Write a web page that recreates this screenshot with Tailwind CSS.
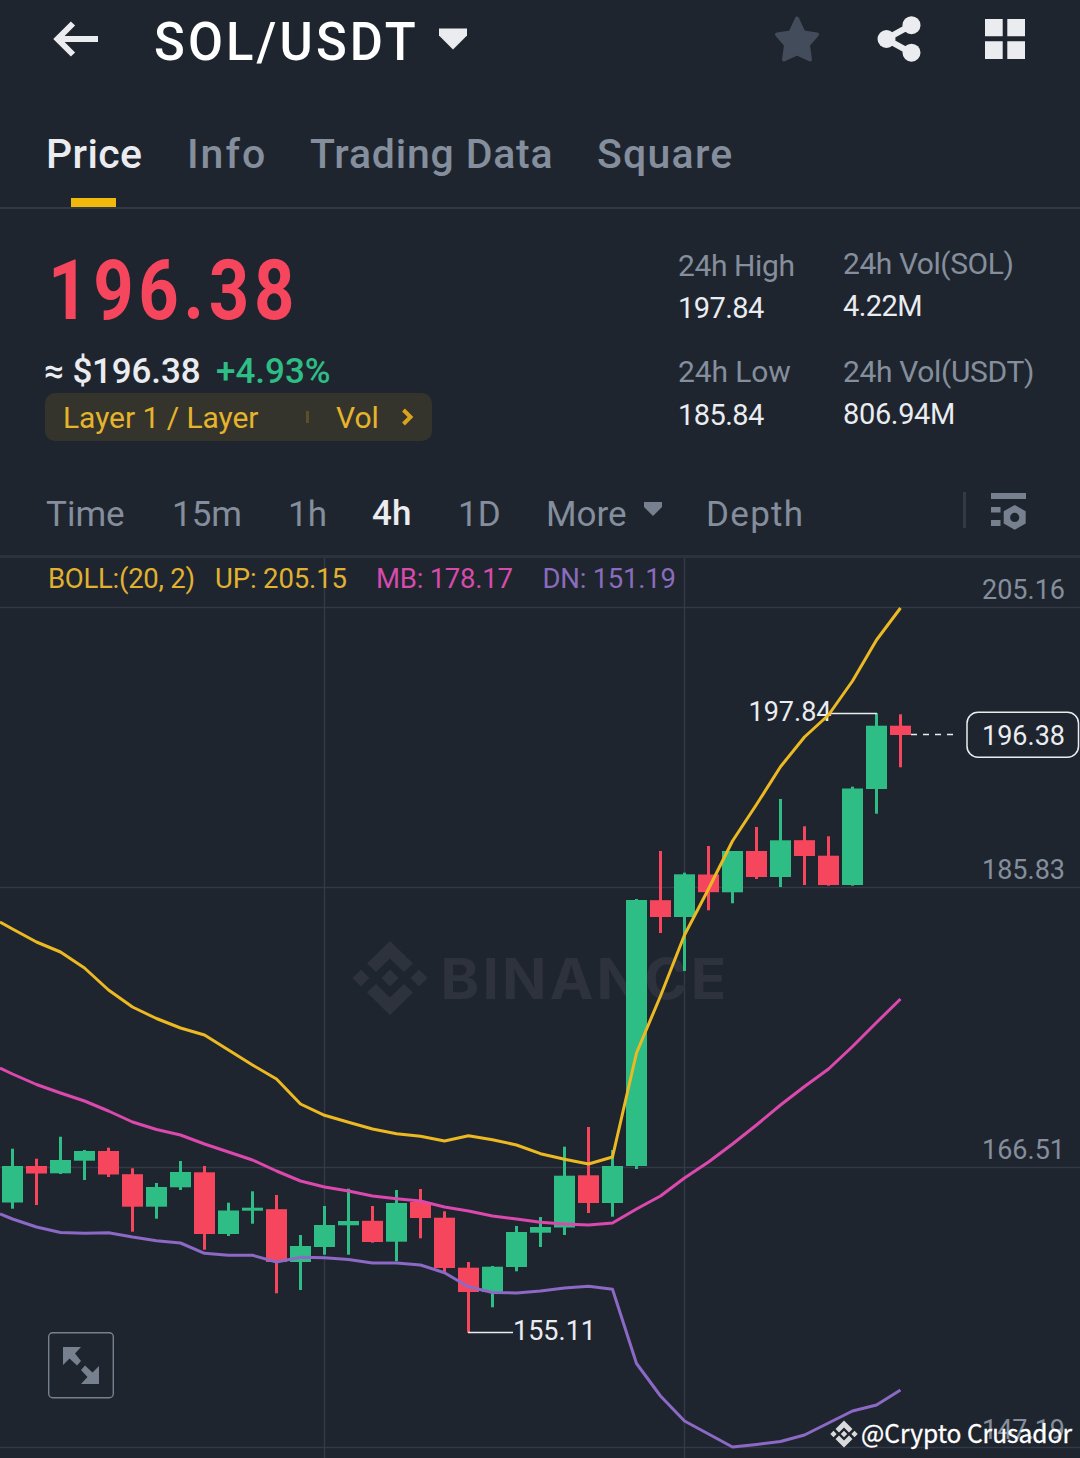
<!DOCTYPE html>
<html lang="en">
<head>
<meta charset="utf-8">
<title>SOL/USDT</title>
<script src="https://cdn.jsdelivr.net/npm/@tailwindcss/browser@4"></script>
</head>
<body class="bg-[#1f252f]">
<main class="flex h-[1458px] w-[1080px] flex-col overflow-hidden bg-[#1f252f] font-[Roboto,sans-serif] whitespace-nowrap text-[#848e9c]">

  <header class="flex h-[82px] shrink-0 pl-[53px]">
    <svg class="mt-[20px] h-[38px] w-[46px]" viewBox="0 0 46 38" fill="none" stroke="#eaecef" stroke-width="6"><path d="M4 19H45M20 3.500L4.500 19L20 34.500"/></svg>
    <h1 class="ml-[55px] w-[285px] origin-left scale-x-[0.94] text-[54px] leading-[83px] font-medium tracking-[3.350px] text-white">SOL/USDT</h1>
    <svg class="mt-[28px] h-[22px] w-[28px]" viewBox="0 0 28 22" fill="#eaecef"><path d="M0 .5H28V7.500L14 21.500L0 7.500Z"/></svg>
    <svg class="mt-[15px] ml-[307px] h-[48px] w-[46px]" viewBox="0 0 46 48" fill="#434c5a" stroke="#434c5a" stroke-width="4" stroke-linejoin="round"><path d="M23 3.500L29.500 17.500L43 19.500L34 30L36 44.500L23 38.500L10 44.500L12 30L3 19.500L16.500 17.500Z"/></svg>
    <svg class="mt-[15px] ml-[57px] h-[48px] w-[44px]" viewBox="0 0 44 48" fill="#eaecef" stroke="#eaecef"><path d="M34.500 10L9 24L34.500 38" fill="none" stroke-width="6"/><g stroke="none"><circle cx="34.500" cy="10.200" r="9"/><circle cx="9.500" cy="24" r="9"/><circle cx="34.500" cy="37.700" r="9"/></g></svg>
    <svg class="mt-[19px] ml-[64px] h-[40px] w-[40px]" viewBox="0 0 40 40" fill="#eaecef"><path d="M0 0H17.700V17.300H0ZM22.300 0H40V17.300H22.300ZM0 22.300H17.700V40H0ZM22.300 22.300H40V40H22.300Z"/></svg>
  </header>

  <nav class="flex h-[127px] shrink-0 border-b-2 border-[#333a46] pt-[42px] pl-[46px] text-[41px] leading-[60px] font-medium">
    <div class="flex w-[141px] flex-col text-[#eaecef]">
      <span class="h-[74px] tracking-[0.400px]">Price</span>
      <i class="ml-[25px] h-[9px] w-[45px] bg-[#f0b90b]"></i>
    </div>
    <span class="w-[123px] tracking-[2px]">Info</span>
    <span class="w-[287px] tracking-[0.800px]">Trading Data</span>
    <span class="tracking-[1.250px]">Square</span>
  </nav>

  <section class="flex h-[263px] shrink-0">
    <div class="w-[678px] pt-[41px]">
      <div class="ml-[48px] h-[100px] w-[300px] origin-left scale-x-[0.84] text-[84px] leading-[82px] font-bold tracking-[5.600px] text-[#f6465d]">196.38</div>
      <div class="flex h-[43px] pl-[44px] text-[35px] leading-[43px] font-medium">
        <span class="w-[172px] tracking-[-0.150px] text-[#eaecef]">≈ $196.38</span>
        <span class="text-[#2ebd85]">+4.93%</span>
      </div>
      <div class="ml-[45px] flex h-[48px] w-[387px] items-center rounded-[10px] bg-[#35342c] pl-[18px] text-[30px] leading-[48px] text-[#e6b42c]">
        <span class="w-[243px] pt-[2px] tracking-[-0.050px]">Layer 1 / Layer</span>
        <i class="h-[12px] w-[3px] bg-[#5c4e28]"></i>
        <span class="ml-[27px] w-[66px] pt-[2px]">Vol</span>
        <svg class="h-[18px] w-[12px]" viewBox="0 0 12 18" fill="none" stroke="#d9a41c" stroke-width="4"><path d="M1.500 2L8.500 9L1.500 16"/></svg>
      </div>
    </div>
    <div class="w-[165px] pt-[36px] text-[30px] leading-[42px]">
      <div class="tracking-[-0.400px]">24h High</div>
      <div class="mb-[22px] text-[29px] tracking-[-0.550px] text-[#eaecef]">197.84</div>
      <div class="tracking-[-0.100px]">24h Low</div>
      <div class="pt-px text-[29px] tracking-[-0.550px] text-[#eaecef]">185.84</div>
    </div>
    <div class="pt-[34px] text-[30px] leading-[42px]">
      <div class="tracking-[-0.450px]">24h Vol(SOL)</div>
      <div class="mb-[24px] text-[29px] tracking-[-0.600px] text-[#eaecef]">4.22M</div>
      <div class="tracking-[-0.350px]">24h Vol(USDT)</div>
      <div class="text-[29px] tracking-[-0.350px] text-[#eaecef]">806.94M</div>
    </div>
  </section>

  <div class="flex h-[86px] shrink-0 border-b-3 border-[#2b313d] pl-[46px] text-[35px] leading-[85px]">
    <span class="w-[126px]">Time</span>
    <span class="w-[116px]">15m</span>
    <span class="w-[84px]">1h</span>
    <span class="w-[86px] leading-[83px] font-medium text-[#eaecef]">4h</span>
    <span class="w-[88px]">1D</span>
    <span class="w-[98px]">More</span>
    <svg class="mt-[30px] h-[14px] w-[18px]" viewBox="0 0 18 14" fill="#76808f"><path d="M0 0H18V5L9 14L0 5Z"/></svg>
    <span class="ml-[44px] w-[257px] tracking-[1.300px]">Depth</span>
    <i class="mt-[20px] h-[36px] w-[3px] bg-[#333a46]"></i>
    <svg class="mt-[21px] ml-[25px] h-[37px] w-[35px]" viewBox="0 0 35 37" fill="#76808f"><path d="M0 0H35V6H0ZM0 14H9.500V19.500H0ZM0 27H9.500V33H0Z"/><path fill-rule="evenodd" d="M23.700 12L34.700 18.200V30.500L23.700 36.800L12.700 30.500V18.200ZM23.700 19.800a4.600 4.600 0 1 0 0 9.200a4.600 4.600 0 1 0 0-9.200Z"/></svg>
  </div>

  <svg class="h-[900px] w-[1080px] shrink-0" viewBox="0 558 1080 900" font-family="Roboto, sans-serif" font-size="27">
    <g stroke="#333945" stroke-width="1.500">
      <path d="M0 607.500H1080M0 887.500H1080M0 1167.500H1080M0 1447.500H1080M324.500 558V1458M684.500 558V1458"/>
    </g>
    <g fill="#2e323d">
      <path d="M390 941L413 963.500L404 972L390 958.500L376 972L367 963.500ZM390 1015L413 992.500L404 984L390 997.500L376 984L367 992.500ZM361 969.500L369.500 978L361 986.500L352.500 978ZM390 969.500L398.500 978L390 986.500L381.500 978ZM419 969.500L427.500 978L419 986.500L410.500 978Z"/>
      <text x="440.500" y="998.500" font-family="Inter, sans-serif" font-weight="700" font-size="56" letter-spacing="3" textLength="289" lengthAdjust="spacingAndGlyphs">BINANCE</text>
    </g>
    <g id="candles"></g>
    <g fill="#848e9c">
      <text x="982" y="598.500">205.16</text>
      <text x="982" y="878.500">185.83</text>
      <text x="982" y="1158.500">166.51</text>
      <text x="982" y="1438.500">147.19</text>
    </g>
    <g fill="#eaecef">
      <text x="748.500" y="720.500">197.84</text>
      <text x="513" y="1339.500">155.11</text>
      <path d="M831 713.500H877M468 1332.500H513" stroke="#eaecef" stroke-width="1.500"/>
      <path d="M911 734.500H954" stroke="#eaecef" stroke-width="1.500" stroke-dasharray="6 6"/>
      <rect x="967" y="712.200" width="111.500" height="45" rx="11" fill="#1f252f" stroke="#eaecef" stroke-width="1.500"/>
      <text x="982" y="744.500">196.38</text>
    </g>
    <g id="bands" fill="none" stroke-width="3" stroke-linejoin="round"></g>
    <g font-size="27.500">
      <text x="48" y="588" fill="#e0b22f" textLength="147">BOLL:(20, 2)</text>
      <text x="215" y="588" fill="#e0b22f" textLength="132">UP: 205.15</text>
      <text x="376" y="588" fill="#d64bab" textLength="137">MB: 178.17</text>
      <text x="542.500" y="588" fill="#8a6cbc" textLength="133.500">DN: 151.19</text>
    </g>
    <rect x="48.700" y="1332.800" width="64.600" height="65" rx="4" fill="none" stroke="#76808f" stroke-width="1.400"/>
    <path d="M63 1347H81L75 1353.500L81 1361L77 1365.500L69.500 1358.500L63 1365ZM99 1384H81L87.500 1377L81 1370L85 1365.500L92.500 1372.500L99 1366Z" fill="#76808f"/>
    <g>
      <path fill="#d9dadc" d="M844 1420.500L852.500 1429L849 1432.500L844 1427.500L839 1432.500L835.500 1429ZM844 1447.500L852.500 1439L849 1435.500L844 1440.500L839 1435.500L835.500 1439ZM833.500 1430.800L836.700 1434L833.500 1437.200L830.300 1434ZM844 1430.800L847.200 1434L844 1437.200L840.800 1434ZM854.500 1430.800L857.700 1434L854.500 1437.200L851.300 1434Z"/>
      <text x="861" y="1443" fill="#fff" stroke="#fff" stroke-width=".3" font-family="'Noto Sans CJK SC', 'Noto Sans', sans-serif" font-size="25" textLength="211" lengthAdjust="spacingAndGlyphs">@Crypto Crusador</text>
    </g>
  </svg>
</main>
<script>
const UP = '#2ebd85', DOWN = '#f6465d';
// one row per candle: direction, body top, body bottom, wick top, wick bottom
const candles = [
  [1,1166,1202.5,1148.7,1208.7],[0,1166,1173.5,1158.7,1205],[1,1160,1173.3,1136.7,1174],[1,1151,1160.7,1150,1180],
  [0,1151,1174.5,1147.7,1177],[0,1174.2,1206.7,1168.3,1231.7],[1,1187,1206.7,1183,1218.7],[1,1172,1187.3,1161,1190],
  [0,1172.3,1234,1166,1249.7],[1,1210.5,1234,1202.7,1236],[1,1207.7,1210.7,1191.3,1223.7],[0,1209.2,1262,1195,1293.3],
  [1,1246,1262,1235,1290],[1,1225,1247,1206,1254.7],[1,1221,1225.3,1188.7,1254.7],[0,1220.8,1242,1206,1242.7],
  [1,1203,1241.7,1190,1261.3],[0,1202,1218,1189,1238.3],[0,1217.7,1268,1211.3,1272.7],[0,1267.7,1292,1262,1332.7],
  [1,1266.7,1292,1266,1307.3],[1,1232,1267,1226,1271.3],[1,1227,1232.7,1217,1247],[1,1175.7,1227.5,1146.7,1235],
  [0,1175.3,1203,1127,1213],[1,1166,1203,1150,1216.7],[1,900,1166,899,1169],[0,900.2,917,851,933],
  [1,874.3,917,872.7,971],[0,874.5,892.2,846,910.3],[1,851,892.3,851,903.3],[0,851,877,827,879],
  [1,840.3,877,799,887],[0,840.2,856,826.3,885],[0,855.7,885,836.3,885.7],[1,788.5,885,786.7,885.7],
  [1,725.7,789,713.3,813.7],[0,725.7,735,714.3,767.3]
];
// Bollinger bands; the first value is at the left edge, the rest at candle centres
const bands = {
  '#ecb923': [922,929,942,952,968,990,1007,1018.5,1028,1035,1050,1065,1079,1104,1115.3,1122.3,1129,1133.7,1136.3,1141,1135.7,1139.7,1145,1153.7,1159.3,1164,1157,1053,996,935,889,841,804.5,766.7,737,715,681,640,608],
  '#dc49ae': [1068,1074,1084.5,1093,1101,1111,1122,1129.5,1135,1144,1152,1160,1171,1181,1187,1191,1196,1198.7,1201,1207,1211,1216,1219,1222.3,1224,1225,1223,1209,1196,1178,1162,1144,1125,1105,1086.5,1069,1046.5,1022.5,999],
  '#8b69c4': [1214,1219,1227,1232.5,1233.3,1232.7,1237,1240.7,1243,1253.3,1255.3,1255.3,1262,1257.3,1257.7,1259.5,1263,1263,1265,1272.7,1286.7,1292.5,1293,1291,1288,1286.3,1289.3,1363.5,1396,1421,1434,1447,1444.5,1441.5,1435,1423,1411,1405,1390]
};
const cx = i => 12.5 + 24 * i;
document.getElementById('candles').innerHTML = candles.map(([up, t, b, h, l], i) => {
  const c = up ? UP : DOWN;
  return `<rect x="${cx(i) - 1.5}" y="${h}" width="3" height="${l - h}" fill="${c}"/><rect x="${cx(i) - 10.5}" y="${t}" width="21" height="${b - t}" fill="${c}"/>`;
}).join('');
document.getElementById('bands').innerHTML = Object.entries(bands).map(([color, ys]) =>
  `<polyline stroke="${color}" points="${ys.map((y, i) => (i ? cx(i - 1) : 0) + ',' + y).join(' ')}"/>`).join('');
</script>
</body>
</html>
